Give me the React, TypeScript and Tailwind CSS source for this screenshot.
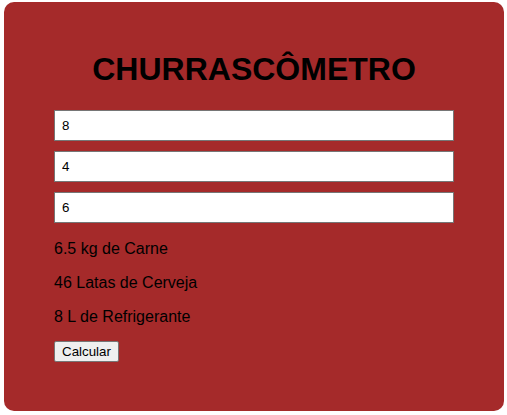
import React, { useState } from 'react';

// Calculadora de churrasco: adultos, crianças e duração
export default function App() {
  const [adultos, setAdultos] = useState('8');
  const [criancas, setCriancas] = useState('4');
  const [horas, setHoras] = useState('6');

  const campo = 'block w-full h-[31px] mb-[10px] px-[7px] bg-white border border-[#767676] text-[13.33px] text-black outline-none';

  return (
    <div className="min-h-screen bg-white pl-[4px] pt-[2px] font-['Liberation_Sans',Arial,sans-serif]">
      <div className="w-[500px] bg-[#a52a2a] rounded-[10px] px-[50px] pt-[49px] pb-[48px] text-black">
        <h1 className="text-center text-[32px] leading-[37px] font-bold mb-[22px]">CHURRASCÔMETRO</h1>
        <input value={adultos} onChange={e => setAdultos(e.target.value)} className={campo} />
        <input value={criancas} onChange={e => setCriancas(e.target.value)} className={campo} />
        <input value={horas} onChange={e => setHoras(e.target.value)} className={campo} />
        <div className="mt-[17px] space-y-[16px] text-[16px] leading-[18px]">
          <p>6.5 kg de Carne</p>
          <p>46 Latas de Cerveja</p>
          <p>8 L de Refrigerante</p>
        </div>
        <button className="mt-[15px] h-[21px] w-[65px] bg-[#efefef] border border-[#767676] rounded-[2px] text-[13.33px] leading-none text-black">Calcular</button>
      </div>
    </div>
  );
}
